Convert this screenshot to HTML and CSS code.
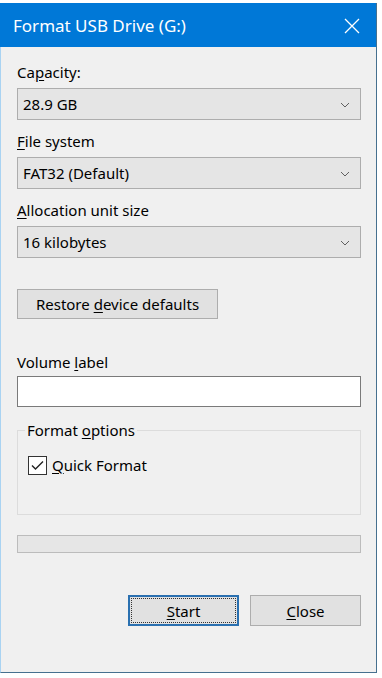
FILE: index.html
```html
<!DOCTYPE html>
<html lang="en">
<head>
    <meta charset="UTF-8">
    <meta name="viewport" content="width=device-width, initial-scale=1.0">
    <title>Format USB Drive (G:)</title>
    <link rel="stylesheet" href="styles.css">
</head>
<body>
    <div class="window">
        <!-- Title bar -->
        <div class="titlebar">
            <span class="title">Format USB Drive (G:)</span>
            <svg class="close-x" width="16" height="16" viewBox="0 0 16 16">
                <path d="M1 1 L15 15 M15 1 L1 15" stroke="#ffffff" stroke-width="1.3" fill="none"/>
            </svg>
        </div>

        <div class="content">
            <div class="label first">Ca<u>p</u>acity:</div>
            <div class="combo">
                <span>28.9 GB</span>
                <svg class="chevron" width="10" height="6" viewBox="0 0 10 6"><polyline points="1,1 5,5 9,1" fill="none" stroke="#606060" stroke-width="1"/></svg>
            </div>

            <div class="label"><u>F</u>ile system</div>
            <div class="combo">
                <span>FAT32 (Default)</span>
                <svg class="chevron" width="10" height="6" viewBox="0 0 10 6"><polyline points="1,1 5,5 9,1" fill="none" stroke="#606060" stroke-width="1"/></svg>
            </div>

            <div class="label"><u>A</u>llocation unit size</div>
            <div class="combo">
                <span>16 kilobytes</span>
                <svg class="chevron" width="10" height="6" viewBox="0 0 10 6"><polyline points="1,1 5,5 9,1" fill="none" stroke="#606060" stroke-width="1"/></svg>
            </div>

            <button class="btn restore">Restore <u>d</u>evice defaults</button>

            <div class="label volume">Volume <u>l</u>abel</div>
            <div class="textbox"></div>

            <!-- Format options -->
            <fieldset class="group">
                <legend>Format <u>o</u>ptions</legend>
                <label class="check">
                    <span class="box">
                        <svg width="15" height="15" viewBox="0 0 15 15"><polyline points="2,7.5 5.5,11 13,3.5" fill="none" stroke="#222" stroke-width="1.4"/></svg>
                    </span>
                    <span><u>Q</u>uick Format</span>
                </label>
            </fieldset>

            <div class="progress"></div>

            <div class="actions">
                <button class="btn default"><span class="focus"><u>S</u>tart</span></button>
                <button class="btn"><u>C</u>lose</button>
            </div>
        </div>
    </div>
</body>
</html>
```

FILE: styles.css
```css
/* Page */
body {
    margin: 0;
    background-color: #ffffff;
    font-family: 'Noto Sans', 'Open Sans', sans-serif;
    font-size: 15px;
    color: #000000;
}

u {
    text-decoration-thickness: 1px;
    text-underline-offset: 2px;
}

.window {
    margin-top: 3px;
    width: 377px;
    height: 670px;
    box-sizing: border-box;
    background-color: #f0f0f0;
    border-left: 1px solid #a9d3f2;
    border-right: 1px solid #46708f;
    border-bottom: 1px solid #46708f;
}

/* Title bar */
.titlebar {
    height: 44px;
    margin-left: -1px;
    background-color: #0078d7;
    display: flex;
    align-items: center;
    justify-content: space-between;
    padding: 0 16px 0 13px;
}

.title {
    color: #ffffff;
    font-size: 17px;
}

.close-x {
    margin-top: 1px;
}

/* Body */
.content {
    padding: 0 15px 0 16px;
}

.label {
    height: 20px;
    line-height: 20px;
    margin-top: 11px;
    margin-bottom: 6px;
}

.label.first {
    margin-top: 15px;
}

.label.volume {
    margin-top: 33px;
    margin-bottom: 4px;
}

.combo {
    height: 32px;
    box-sizing: border-box;
    background-color: #e5e5e5;
    border: 1px solid #adadad;
    display: flex;
    align-items: center;
    justify-content: space-between;
    padding: 0 10px 0 5px;
}

.chevron {
    margin-top: 1px;
}

.btn {
    font-family: inherit;
    font-size: 15px;
    color: #000000;
    background-color: #e1e1e1;
    border: 1px solid #adadad;
    height: 31px;
    box-sizing: border-box;
    padding: 0;
}

.restore {
    display: block;
    margin-top: 31px;
    width: 201px;
    height: 30px;
}

.textbox {
    height: 31px;
    box-sizing: border-box;
    background-color: #ffffff;
    border: 1px solid #7a7a7a;
}

.group {
    margin: 14px 0 0 0;
    padding: 16px 0 0 10px;
    height: 94px;
    box-sizing: border-box;
    border: 1px solid #dcdcdc;
}

.group legend {
    padding: 0 2px;
    margin-left: -3px;
    line-height: 18px;
}

.check {
    display: flex;
    align-items: center;
    gap: 5px;
}

.check .box {
    width: 19px;
    height: 19px;
    box-sizing: border-box;
    border: 1px solid #333333;
    background-color: #ffffff;
    display: flex;
    align-items: center;
    justify-content: center;
}

.progress {
    margin-top: 20px;
    height: 18px;
    box-sizing: border-box;
    background-color: #e6e6e6;
    border: 1px solid #bcbcbc;
}

.actions {
    margin-top: 42px;
    display: flex;
    justify-content: flex-end;
    gap: 11px;
}

.actions .btn {
    width: 111px;
}

.btn.default {
    border: 2px solid #2a70b0;
    padding: 1px;
}

.btn.default .focus {
    display: flex;
    align-items: center;
    justify-content: center;
    height: 100%;
    box-sizing: border-box;
    border: 1px dotted #333333;
}
```
